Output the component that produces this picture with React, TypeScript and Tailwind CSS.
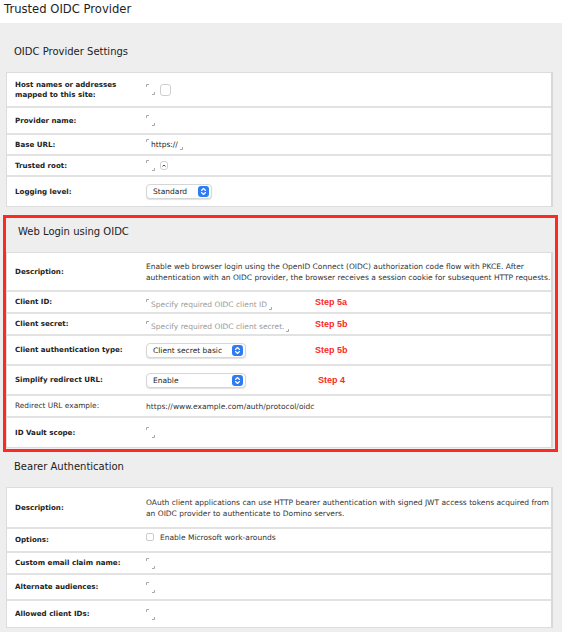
import React from "react";

const TL = () => (
  <svg width="3" height="3" viewBox="0 0 3 3" className="inline-block self-start shrink-0">
    <path d="M0.5 3V0.5H3" stroke="#a8a8a8" strokeWidth="1" fill="none" />
  </svg>
);
const BR = () => (
  <svg width="3" height="3" viewBox="0 0 3 3" className="inline-block self-end shrink-0">
    <path d="M0 2.5H2.5V0" stroke="#a8a8a8" strokeWidth="1" fill="none" />
  </svg>
);

const Marks = ({ children }: { children?: React.ReactNode }) => (
  <span className="inline-flex items-stretch h-[11px] gap-[3px]">
    <TL />
    {children ? <span className="self-center -mx-[1px]">{children}</span> : null}
    <BR />
  </span>
);

const Select = ({ label, w }: { label: string; w: number }) => (
  <div
    className="flex items-center justify-between h-[15px] rounded-[4px] bg-white border border-[#d6d6d6] shadow-[0_1px_1px_rgba(0,0,0,0.12)] pl-[6px] pr-[2px] text-[7.5px] text-[#222]"
    style={{ width: w }}
  >
    <span>{label}</span>
    <span className="w-[11px] h-[11px] rounded-[3px] bg-[#2d7cf6] flex items-center justify-center">
      <svg width="7" height="9" viewBox="0 0 7 9">
        <path d="M1.5 3.5L3.5 1.5L5.5 3.5M1.5 5.5L3.5 7.5L5.5 5.5" stroke="#fff" strokeWidth="1.1" fill="none" strokeLinecap="round" strokeLinejoin="round" />
      </svg>
    </span>
  </div>
);

const Step = ({ t, ml }: { t: string; ml: number }) => (
  <span
    className="font-['Liberation_Sans',Arial,sans-serif] font-bold text-[9px] text-[#fb2a22]"
    style={{ marginLeft: ml }}
  >
    {t}
  </span>
);

const Row = ({
  label,
  h,
  children,
  last,
  plain,
}: {
  label: string;
  h: number;
  children?: React.ReactNode;
  last?: boolean;
  plain?: boolean;
}) => (
  <div
    className={`flex items-center ${last ? "" : "border-b-2 border-[#e2e2e2]"}`}
    style={{ height: h }}
  >
    <div
      className={`w-[139px] shrink-0 pl-[8px] leading-[10px] ${
        plain ? "font-normal text-[#333] text-[7.4px]" : "font-bold text-[#222] text-[7.1px]"
      }`}
    >
      {label}
    </div>
    <div className="flex-1 min-w-0 flex items-center text-[7.5px] leading-[11px] text-[#333]">{children}</div>
  </div>
);

const Table = ({ children }: { children: React.ReactNode }) => (
  <div className="ml-[6px] mr-[9px] bg-white border border-[#dcdcdc] border-r-2 border-r-[#d8d8d8]">
    {children}
  </div>
);

export default function App() {
  return (
    <div className="relative w-[562px] h-[632px] overflow-hidden bg-white font-['DejaVu_Sans',sans-serif] flex flex-col">
      <div className="h-[23px] pl-[4px] text-[11.6px] leading-[19px] text-[#1e1e1e]">Trusted OIDC Provider</div>
      <div className="flex-1 bg-[#eeeeee] flex flex-col">
        <div className="h-[49px] pl-[14px] pt-[22px] text-[10px] leading-[14px] text-[#222]">OIDC Provider Settings</div>
        <Table>
          <Row label="Host names or addresses mapped to this site:" h={35}>
            <Marks />
            <span className="ml-[5px] w-[11px] h-[12px] rounded-[3px] border border-[#cfcfcf] bg-white" />
          </Row>
          <Row label="Provider name:" h={27}>
            <Marks />
          </Row>
          <Row label="Base URL:" h={21}>
            <Marks>
              <span className="text-[#222]">https://</span>
            </Marks>
          </Row>
          <Row label="Trusted root:" h={21}>
            <Marks />
            <span className="ml-[5px] w-[8px] h-[9px] rounded-[3px] border border-[#d0d0d0] bg-white flex items-center justify-center">
              <svg width="4" height="3" viewBox="0 0 4 3">
                <path d="M0.5 2.5L2 1L3.5 2.5" stroke="#333" strokeWidth="0.9" fill="none" />
              </svg>
            </span>
          </Row>
          <Row label="Logging level:" h={29} last>
            <Select label="Standard" w={66} />
          </Row>
        </Table>

        <div className="h-[45px] pl-[18px] pt-[18px] text-[10px] leading-[14px] text-[#222]">Web Login using OIDC</div>
        <Table>
          <Row label="Description:" h={39}>
            <span className="whitespace-nowrap">
              Enable web browser login using the OpenID Connect (OIDC) authorization code flow with PKCE. After
              <br />
              authentication with an OIDC provider, the browser receives a session cookie for subsequent HTTP requests.
            </span>
          </Row>
          <Row label="Client ID:" h={22}>
            <span className="w-[169px] shrink-0">
              <Marks>
                <span className="text-[#9a9a9a]">Specify required OIDC client ID</span>
              </Marks>
            </span>
            <Step t="Step 5a" ml={0} />
          </Row>
          <Row label="Client secret:" h={22}>
            <span className="w-[169px] shrink-0">
              <Marks>
                <span className="text-[#9a9a9a]">Specify required OIDC client secret.</span>
              </Marks>
            </span>
            <Step t="Step 5b" ml={0} />
          </Row>
          <Row label="Client authentication type:" h={30}>
            <Select label="Client secret basic" w={100} />
            <Step t="Step 5b" ml={69} />
          </Row>
          <Row label="Simplify redirect URL:" h={30}>
            <Select label="Enable" w={100} />
            <Step t="Step 4" ml={72} />
          </Row>
          <Row label="Redirect URL example:" h={22} plain>
            <span>https://www.example.com/auth/protocol/oidc</span>
          </Row>
          <Row label="ID Vault scope:" h={29} last>
            <Marks />
          </Row>
        </Table>

        <div className="h-[39px] pl-[14px] pt-[12px] text-[10px] leading-[14px] text-[#222]">Bearer Authentication</div>
        <Table>
          <Row label="Description:" h={41}>
            <span className="whitespace-nowrap">
              OAuth client applications can use HTTP bearer authentication with signed JWT access tokens acquired from
              <br />
              an OIDC provider to authenticate to Domino servers.
            </span>
          </Row>
          <Row label="Options:" h={24}>
            <span className="flex items-center gap-[6px] -mt-[6px]">
              <span className="w-[8px] h-[8px] rounded-[2px] border border-[#cccccc] bg-white" />
              <span>Enable Microsoft work-arounds</span>
            </span>
          </Row>
          <Row label="Custom email claim name:" h={22}>
            <Marks />
          </Row>
          <Row label="Alternate audiences:" h={26}>
            <Marks />
          </Row>
          <Row label="Allowed client IDs:" h={26} last>
            <Marks />
          </Row>
        </Table>
      </div>
      <div className="absolute left-[3px] top-[215px] w-[555px] h-[237px] border-[3px] border-[#fb2a22] pointer-events-none" />
    </div>
  );
}
